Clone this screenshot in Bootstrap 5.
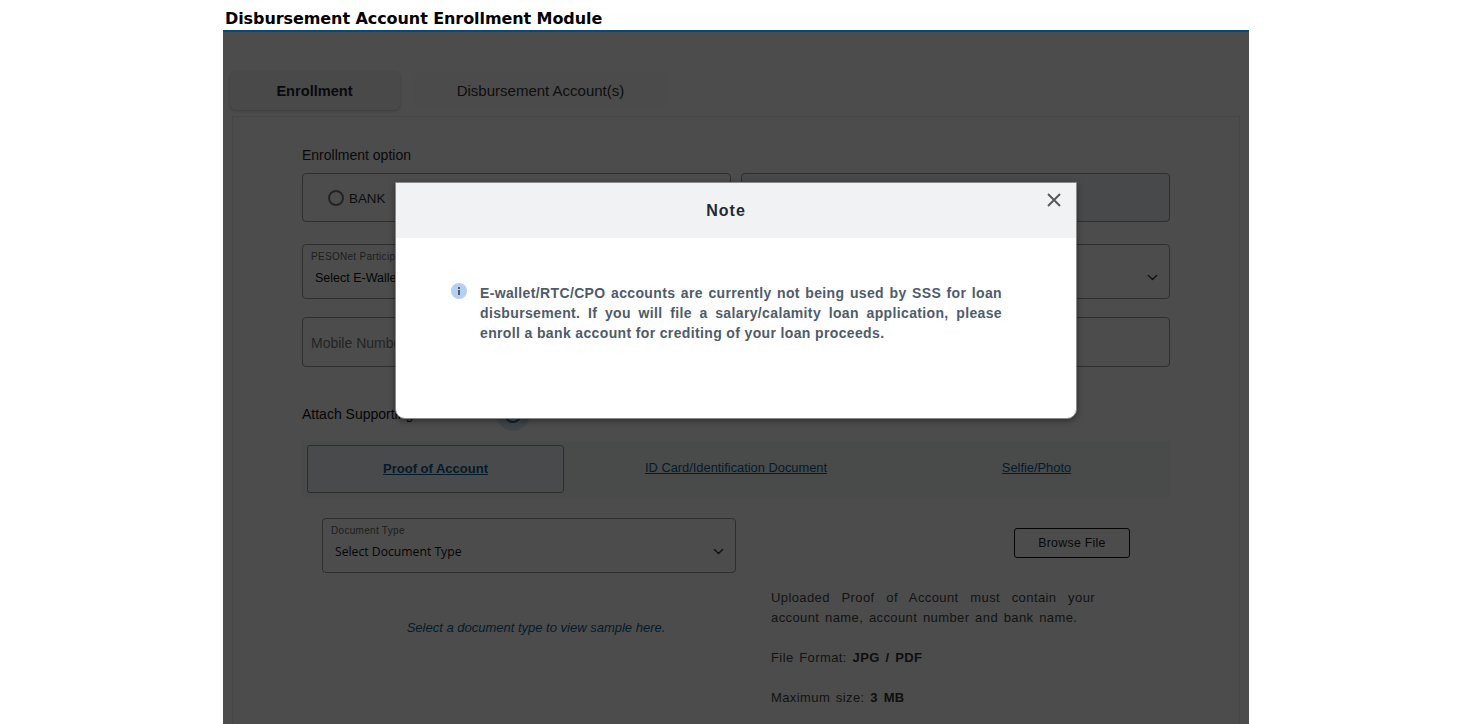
<!DOCTYPE html>
<html lang="en">
<head>
    <meta charset="UTF-8">
    <meta name="viewport" content="width=device-width, initial-scale=1">
    <title>Disbursement Account Enrollment Module</title>
    <link href="https://cdn.jsdelivr.net/npm/bootstrap@5.3.2/dist/css/bootstrap.min.css" rel="stylesheet">
    <style>
        html, body { height: 724px; overflow: hidden; }
        body { font-family: "Liberation Sans", Arial, sans-serif; font-size: 14px; background: #fff; color: #212529; }
        .page-wrap { width: 1026px; margin-left: 223px; }
        .module-title { font-family: "DejaVu Sans", Verdana, sans-serif; font-weight: 700; font-size: 16px; letter-spacing: -.08px; line-height: 20px; height: 32px; padding: 9px 0 0 2px; color: #000; border-bottom: 2px solid #004b80; }
        .module-body { position: relative; height: 692px; overflow: hidden; padding: 39px 9px 0 9px; background: #fff; }
        .dimmer { position: absolute; inset: 0; background: rgba(0, 0, 0, .7); }

        .tab-row { gap: 14px; height: 39px; margin-left: -2px; }
        .tab-item { height: 39px; line-height: 39px; text-align: center; border-radius: 6px; color: #333; font-size: 15px; }
        .tab-item.on { width: 170px; line-height: 41px; padding-right: 1px; font-weight: 700; font-size: 14.6px; color: #1c2431; background: #f3f4f6; box-shadow: 0 1px 3px rgba(0,0,0,.25); }
        .tab-item.off { width: 253px; background: #fcfcfc; }
        .tab-panel { margin-top: 6px; height: 640px; border: 1px solid #e6e6e6; padding: 29px 69px 0 69px; }

        .field-label { line-height: 18px; margin-bottom: 9px; color: #222; }
        .choice-row { gap: 10px; }
        .choice-box { flex: 1; height: 49px; border: 1px solid #999; border-radius: 4px; display: flex; align-items: center; padding-left: 25px; gap: 5px; color: #333; font-size: 13.4px; }
        .choice-box.picked { background: #f0f4f8; }
        .choice-text { padding-top: 3px; }
        .radio-dot { width: 16px; height: 16px; border: 2px solid #777; border-radius: 50%; }

        .form-floating.field-select { margin-top: 22px; }
        .field-select .form-select { height: 55px; min-height: 55px; border-color: #999; border-radius: 4px; font-family: "Open Sans", sans-serif; font-size: 12.2px; color: #111; padding: 20px 36px 8px 12px; background-size: 11px 11px; background-position: right 11px top 27px; }
        .field-select .wallet-select { font-family: "Liberation Sans", sans-serif; font-size: 12.5px; padding-top: 21px; padding-bottom: 7px; }
        .field-select label { font-size: 10px; color: #666; padding: 4px 8px; height: auto; letter-spacing: .3px; transform: none !important; opacity: 1 !important; }
        .mobile-input { margin-top: 18px; height: 50px; border-color: #999; border-radius: 4px; font-size: 14px; padding: 1px 8px 0 8px; }
        .mobile-input::placeholder { color: #777; }

        .attach-row { margin-top: 38px; height: 18px; line-height: 18px; color: #111; }
        .attach-dot { position: absolute; left: 281px; top: 373px; width: 18px; height: 18px; border-radius: 50%; background: #fff; border: 2px solid #1b6fa8; box-shadow: 0 0 0 8px rgba(27,111,168,.16); }

        .doc-tabs { margin-top: 18px; height: 57px; background: #f6f9f8; padding: 4px 5px; display: flex; }
        .doc-tab { flex: 1; display: flex; align-items: center; justify-content: center; height: 45px; color: #0b5c92; font-size: 12.85px; }
        .doc-tab.on { flex: 0 0 257px; height: 48px; border: 1px solid #999; border-radius: 3px; font-weight: 700; background: #f5f8fb; font-size: 13px; }
        .doc-tab.mid { flex: 0 0 344px; }

        .doc-area { padding: 20px 0 0 20px; gap: 35px; }
        .doc-left { width: 414px; }
        .doc-left .form-floating.field-select { margin-top: 0; }
        .sample-note { margin-top: 45px; text-align: center; font-style: italic; font-size: 13px; color: #0b5c92; padding-left: 14px; }
        .doc-right { width: 324px; font-size: 13px; color: #444; letter-spacing: .4px; word-spacing: 1.7px; line-height: 20px; }
        .doc-right b { color: #333; }
        .browse-btn { width: 116px; height: 30px; padding: 0; border: 1px solid #111; font-size: 12.3px; color: #222; margin: 10px 0 30px 243px; display: block; letter-spacing: .3px; border-radius: 3px; background: #fff; }
        .doc-right p { margin-bottom: 20px; }
        .doc-right .fill-line { text-align: justify; }

        .note-modal { position: absolute; left: 172px; top: 150px; width: 682px; height: 237px; border-radius: 0 0 10px 10px; border: 1px solid #8a8a8a; overflow: hidden; box-shadow: 0 2px 6px rgba(0,0,0,.4); background: #fff; }
        .note-modal .modal-header { height: 55px; background: #f1f2f4; border: 0; border-radius: 0; justify-content: center; padding: 0 20px 0 0; position: relative; }
        .note-modal .modal-title { font-size: 16px; font-weight: 700; letter-spacing: 1px; color: #212b36; line-height: 55px; }
        .note-close { position: absolute; top: 10px; right: 15px; width: 14px; height: 14px; padding: 0; border: 0; background: none; line-height: 0; }
        .note-body { padding: 45px 74px 0 55px; gap: 13px; }
        .note-icon { flex: 0 0 16px; width: 16px; height: 16px; }
        .note-text { margin: 0; font-weight: 700; font-size: 14px; line-height: 20px; letter-spacing: .36px; text-align: justify; color: #4f5b6b; }
    </style>
</head>
<body>
<div class="page-wrap">
    <div class="module-title">Disbursement Account Enrollment Module</div>
    <div class="module-body">
        <div class="d-flex tab-row">
            <div class="tab-item on">Enrollment</div>
            <div class="tab-item off">Disbursement Account(s)</div>
        </div>
        <div class="tab-panel">
            <div class="field-label">Enrollment option</div>
            <div class="d-flex choice-row">
                <div class="choice-box"><span class="radio-dot"></span><span class="choice-text">BANK</span></div>
                <div class="choice-box picked"></div>
            </div>
            <div class="form-floating field-select">
                <select class="form-select wallet-select" id="walletSelect"><option>Select E-Wallet</option></select>
                <label for="walletSelect">PESONet Participant</label>
            </div>
            <input class="form-control mobile-input" type="text" placeholder="Mobile Number">
            <div class="attach-row">Attach Supporting Documents</div>
            <div class="doc-tabs">
                <a href="#" class="doc-tab on">Proof of Account</a>
                <a href="#" class="doc-tab mid">ID Card/Identification Document</a>
                <a href="#" class="doc-tab">Selfie/Photo</a>
            </div>
            <div class="d-flex doc-area">
                <div class="doc-left">
                    <div class="form-floating field-select">
                        <select class="form-select" id="docSelect"><option>Select Document Type</option></select>
                        <label for="docSelect">Document Type</label>
                    </div>
                    <div class="sample-note">Select a document type to view sample here.</div>
                </div>
                <div class="doc-right">
                    <button class="btn browse-btn" type="button">Browse File</button>
                    <p class="fill-line">Uploaded Proof of Account must contain your account name, account number and bank name.</p>
                    <p>File Format: <b>JPG / PDF</b></p>
                    <p>Maximum size: <b>3 MB</b></p>
                </div>
            </div>
        </div>
        <div class="attach-dot"></div>
        <div class="dimmer"></div>
        <div class="note-modal">
            <div class="modal-header">
                <h5 class="modal-title">Note</h5>
                <button class="note-close" type="button" aria-label="Close">
                    <svg width="14" height="14" viewBox="0 0 14 14"><path d="M1 1L13 13M13 1L1 13" stroke="#555" stroke-width="1.8" fill="none"/></svg>
                </button>
            </div>
            <div class="d-flex note-body">
                <svg class="note-icon" viewBox="0 0 16 16"><circle cx="8" cy="8" r="8" fill="#b4d0f0"/><rect x="7" y="7" width="2" height="5" fill="#4f5b6b"/><rect x="7" y="4" width="2" height="2" fill="#4f5b6b"/></svg>
                <p class="note-text">E-wallet/RTC/CPO accounts are currently not being used by SSS for loan disbursement. If you will file a salary/calamity loan application, please enroll a bank account for crediting of your loan proceeds.</p>
            </div>
        </div>
    </div>
</div>
<script src="https://cdn.jsdelivr.net/npm/bootstrap@5.3.2/dist/js/bootstrap.bundle.min.js"></script>
</body>
</html>
